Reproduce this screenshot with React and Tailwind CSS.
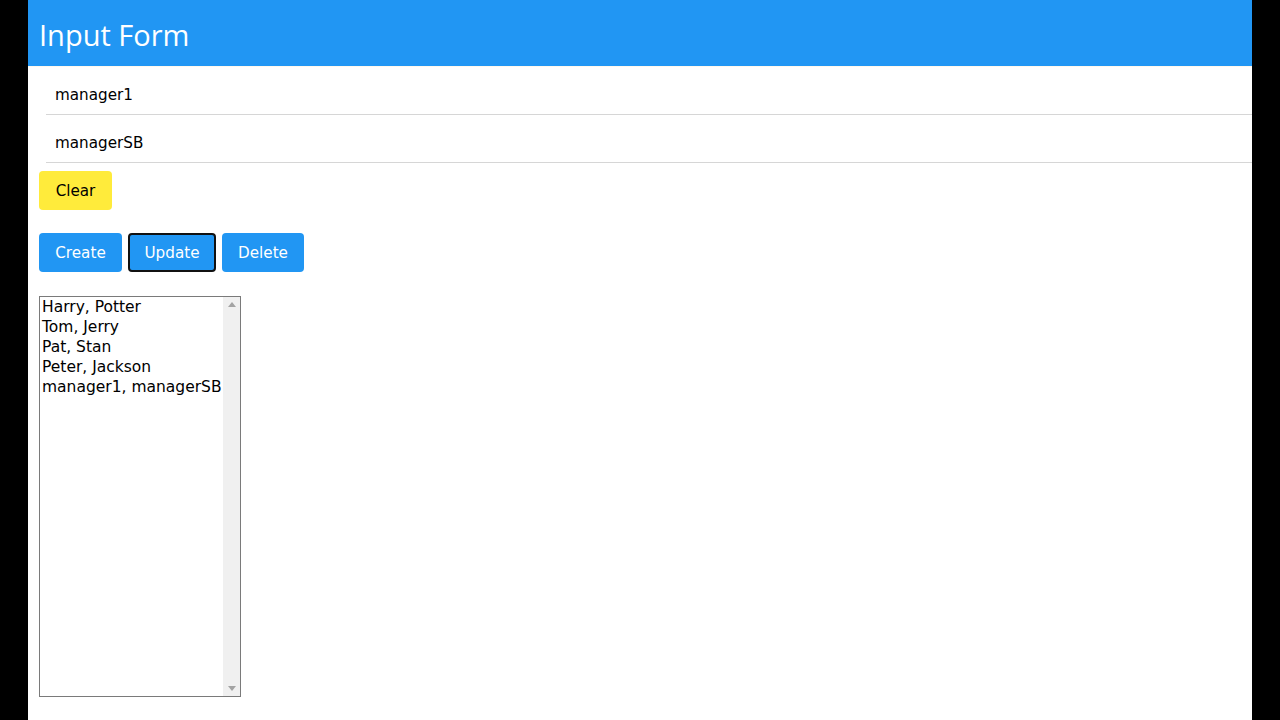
import { useState } from 'react';

const people = [
    'Harry, Potter',
    'Tom, Jerry',
    'Pat, Stan',
    'Peter, Jackson',
    'manager1, managerSB',
];

function Scrollbar() {
    return (
        <div className="w-[17px] bg-[#f0f0f0] flex flex-col items-center justify-between py-[5px]">
            <svg width="8" height="5" viewBox="0 0 8 5">
                <path d="M0 5 L4 0 L8 5 Z" fill="#a3a3a3" />
            </svg>
            <svg width="8" height="5" viewBox="0 0 8 5">
                <path d="M0 0 L4 5 L8 0 Z" fill="#a3a3a3" />
            </svg>
        </div>
    );
}

export default function App() {
    const [nombre, setNombre] = useState('manager1');
    const [apellido, setApellido] = useState('managerSB');

    return (
        <div className="min-h-screen bg-black flex justify-center">
            <div className="w-[1224px] min-h-screen bg-white">
                <header className="h-[66px] bg-[#2196f3] flex items-center px-[11px]">
                    <h1 className="text-white text-[29px] font-['Open_Sans',sans-serif] pt-[3px]">Input Form</h1>
                </header>

                <div className="pl-[18px] pt-[9px] border-t border-[#fff8ee]">
                    <input
                        className="block w-full h-[39px] px-[9px] border-b border-[#d6d6d6] outline-none text-[15.2px] text-black font-['DejaVu_Sans',Verdana,sans-serif]"
                        value={nombre}
                        onChange={(e) => setNombre(e.target.value)}
                    />
                    <input
                        className="block w-full h-[39px] mt-[9px] px-[9px] border-b border-[#d6d6d6] outline-none text-[15.2px] text-black font-['DejaVu_Sans',Verdana,sans-serif]"
                        value={apellido}
                        onChange={(e) => setApellido(e.target.value)}
                    />
                </div>

                <div className="px-[11px] font-['DejaVu_Sans',Verdana,sans-serif] text-[15.2px]">
                    <button className="mt-[8px] h-[39px] w-[73px] pt-[1px] bg-[#ffeb3b] text-black rounded-[4px]">Clear</button>

                    <div className="mt-[23px] flex gap-[6px]">
                        <button className="h-[39px] w-[83px] pt-[1px] bg-[#2196f3] text-white rounded-[4px]">Create</button>
                        <button className="h-[39px] w-[88px] pt-[1px] bg-[#2196f3] text-white rounded-[4px] border-2 border-[#111]">Update</button>
                        <button className="h-[39px] w-[82px] pt-[1px] bg-[#2196f3] text-white rounded-[4px]">Delete</button>
                    </div>

                    <div className="mt-[24px] w-[202px] h-[401px] border border-[#7a7a7a] flex">
                        <ul className="flex-1 pl-[2px] text-[15.5px] text-black leading-[20px]">
                            {people.map((p) => (
                                <li key={p} className="whitespace-nowrap">{p}</li>
                            ))}
                        </ul>
                        <Scrollbar />
                    </div>
                </div>
            </div>
        </div>
    );
}
